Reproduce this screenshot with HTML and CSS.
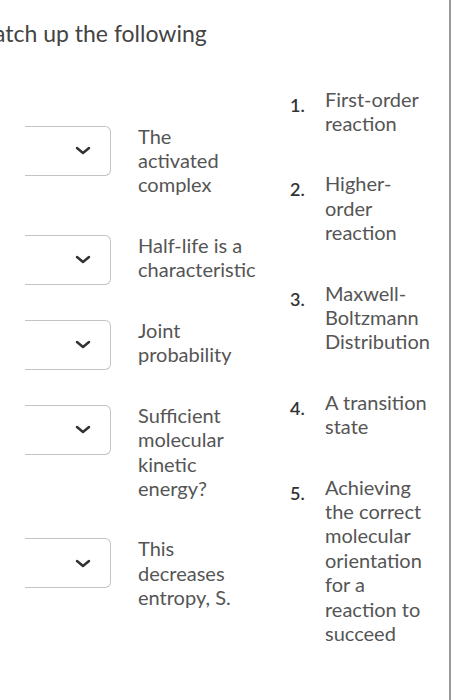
FILE: index.html
```html
<!DOCTYPE html>
<html>
<head>
<meta charset="utf-8">
<link rel="stylesheet" href="styles.css">
</head>
<body>
<div class="page">
  <h1 class="title">Match up the following</h1>
  <div class="match">
    <div class="prompts">
      <div class="prompt">
        <div class="select"><svg class="chev" viewBox="0 0 16 9" width="16" height="9"><path d="M2 2 L8 7 L14 2" fill="none" stroke="#333" stroke-width="2.5" stroke-linecap="round" stroke-linejoin="round"/></svg></div>
        <div class="ptext">The activated complex</div>
      </div>
      <div class="prompt">
        <div class="select"><svg class="chev" viewBox="0 0 16 9" width="16" height="9"><path d="M2 2 L8 7 L14 2" fill="none" stroke="#333" stroke-width="2.5" stroke-linecap="round" stroke-linejoin="round"/></svg></div>
        <div class="ptext">Half-life is a characteristic</div>
      </div>
      <div class="prompt">
        <div class="select"><svg class="chev" viewBox="0 0 16 9" width="16" height="9"><path d="M2 2 L8 7 L14 2" fill="none" stroke="#333" stroke-width="2.5" stroke-linecap="round" stroke-linejoin="round"/></svg></div>
        <div class="ptext">Joint probability</div>
      </div>
      <div class="prompt">
        <div class="select"><svg class="chev" viewBox="0 0 16 9" width="16" height="9"><path d="M2 2 L8 7 L14 2" fill="none" stroke="#333" stroke-width="2.5" stroke-linecap="round" stroke-linejoin="round"/></svg></div>
        <div class="ptext">Sufficient molecular kinetic energy?</div>
      </div>
      <div class="prompt">
        <div class="select"><svg class="chev" viewBox="0 0 16 9" width="16" height="9"><path d="M2 2 L8 7 L14 2" fill="none" stroke="#333" stroke-width="2.5" stroke-linecap="round" stroke-linejoin="round"/></svg></div>
        <div class="ptext">This decreases entropy, S.</div>
      </div>
    </div>
    <ol class="answers">
      <li class="answer"><span class="num">1.</span><span class="atext">First-order reaction</span></li>
      <li class="answer"><span class="num">2.</span><span class="atext">Higher-order reaction</span></li>
      <li class="answer"><span class="num">3.</span><span class="atext">Maxwell-Boltzmann Distribution</span></li>
      <li class="answer"><span class="num">4.</span><span class="atext">A transition state</span></li>
      <li class="answer"><span class="num">5.</span><span class="atext">Achieving the correct molecular orientation for a reaction to succeed</span></li>
    </ol>
  </div>
</div>
</body>
</html>
```

FILE: styles.css
```css
html, body {
  margin: 0;
  padding: 0;
  background: #fff;
  overflow: hidden;
}
body {
  font-family: Lato, "Open Sans", sans-serif;
  color: #555;
}
.page {
  width: 449px;
  height: 700px;
  border-right: 2px solid #9a9a9a;
  box-sizing: content-box;
  overflow: hidden;
}
.title {
  margin: 20px 0 0 -27px;
  font-size: 23px;
  font-weight: 400;
  line-height: 27.6px;
  color: #444;
  white-space: nowrap;
}
.match {
  display: flex;
  align-items: flex-start;
}
.prompts {
  display: flex;
  flex-direction: column;
  gap: 35px;
  margin-top: 78px;
  width: 290px;
  flex: none;
}
.prompt {
  display: flex;
  align-items: flex-start;
}
.select {
  margin-left: 25px;
  width: 86px;
  height: 50px;
  box-sizing: border-box;
  border: 1px solid #c4c4c4;
  border-left: none;
  border-radius: 0 6px 6px 0;
  display: flex;
  align-items: center;
  justify-content: flex-end;
  padding-right: 19px;
  flex: none;
}
.chev {
  display: block;
}
.ptext {
  margin-left: 27px;
  margin-top: -2px;
  padding-bottom: 3px;
  width: 110px;
  font-size: 20px;
  line-height: 24.4px;
}
.answers {
  list-style: none;
  margin: 39px 0 0 0;
  padding: 0;
  display: flex;
  flex-direction: column;
  gap: 36px;
}
.answer {
  display: flex;
  align-items: flex-start;
}
.num {
  width: 35px;
  flex: none;
  font-size: 18px;
  line-height: 24.4px;
  color: #333;
  font-weight: 600;
  padding-top: 6px;
}
.atext {
  width: 106px;
  font-size: 20px;
  line-height: 24.4px;
}
```
